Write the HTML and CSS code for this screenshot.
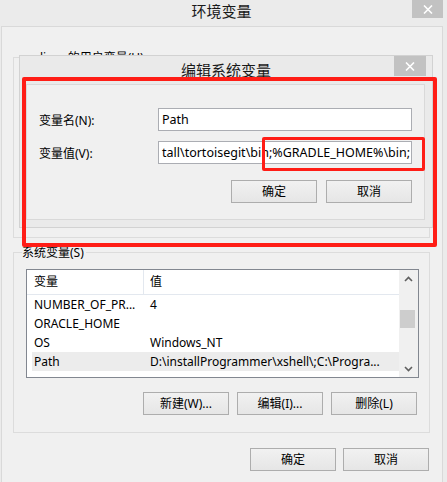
FILE: index.html
```html
<!DOCTYPE html>
<html lang="zh-CN">
<head>
<meta charset="utf-8">
<title>环境变量</title>
<link rel="stylesheet" href="styles.css">
</head>
<body>
<div class="window">
  <div class="titlebar">
    <span class="spacer"></span>
    <span class="title">环境变量</span>
    <span class="close-cell">
      <span class="close close-main">
        <svg width="10" height="9" viewBox="0 0 10 9"><path d="M1 0.5 L9 8.5 M9 0.5 L1 8.5" stroke="#fff" stroke-width="1.6" fill="none"/></svg>
      </span>
    </span>
  </div>
  <div class="client">
    <div class="group user-group">
      <div class="group-label">malimo 的用户变量(U)</div>
    </div>
    <div class="group sys-group">
      <div class="group-label">系统变量(S)</div>
      <div class="listview">
        <div class="list-body">
          <div class="list-header">
            <div class="hcell c1">变量</div>
            <div class="hcell c2">值</div>
          </div>
          <div class="row"><span class="cell">NUMBER_OF_PR...</span><span class="cell">4</span></div>
          <div class="row"><span class="cell">ORACLE_HOME</span><span class="cell"></span></div>
          <div class="row"><span class="cell">OS</span><span class="cell">Windows_NT</span></div>
          <div class="row selected"><span class="cell">Path</span><span class="cell">D:\installProgrammer\xshell\;C:\Progra...</span></div>
        </div>
        <div class="scrollbar">
          <div class="sb-arrow">
            <svg width="9" height="6" viewBox="0 0 9 6"><path d="M1 5 L4.5 1.5 L8 5" stroke="#5f5f5f" stroke-width="1.6" fill="none"/></svg>
          </div>
          <div class="sb-track"><div class="sb-thumb"></div></div>
          <div class="sb-arrow">
            <svg width="9" height="6" viewBox="0 0 9 6"><path d="M1 1 L4.5 4.5 L8 1" stroke="#5f5f5f" stroke-width="1.6" fill="none"/></svg>
          </div>
        </div>
      </div>
      <div class="btn-row group-btns">
        <button class="btn">新建(W)...</button>
        <button class="btn">编辑(I)...</button>
        <button class="btn">删除(L)</button>
      </div>
    </div>
    <div class="btn-row main-btns">
      <button class="btn">确定</button>
      <button class="btn">取消</button>
    </div>
  </div>

  <div class="edit-dialog">
    <div class="dlg-titlebar">
      <span class="spacer"></span>
      <span class="dlg-title">编辑系统变量</span>
      <span class="close-cell">
        <span class="close close-dlg">
          <svg width="10" height="9" viewBox="0 0 10 9"><path d="M1 0.5 L9 8.5 M9 0.5 L1 8.5" stroke="#fff" stroke-width="1.6" fill="none"/></svg>
        </span>
      </span>
    </div>
    <div class="dlg-client">
      <div class="form-row">
        <label class="form-label">变量名(N):</label>
        <div class="textbox">Path</div>
      </div>
      <div class="form-row">
        <label class="form-label">变量值(V):</label>
        <div class="textbox">tall\tortoisegit\bin;%GRADLE_HOME%\bin;</div>
      </div>
      <div class="btn-row dlg-btns">
        <button class="btn">确定</button>
        <button class="btn">取消</button>
      </div>
    </div>
  </div>

  <div class="mark mark-big"></div>
  <div class="mark mark-small"></div>
</div>
</body>
</html>
```

FILE: styles.css
```css
* { box-sizing: border-box; }

html, body {
  margin: 0;
  padding: 0;
  background: #ebebeb;
}

body {
  font-family: "Noto Sans", "Noto Sans CJK SC", sans-serif;
  font-size: 12px;
  color: #000;
}

.window {
  position: relative;
  width: 447px;
  height: 482px;
  overflow: hidden;
  background: #ebebeb;
}

/* ---------- title bars ---------- */
.titlebar {
  display: grid;
  grid-template-columns: 1fr auto 1fr;
  height: 26px;
  padding-right: 4px;
}

.title {
  font-family: "Noto Sans CJK SC", sans-serif;
  font-size: 15px;
  line-height: 22px;
  color: #1a1a1a;
}

.close-cell {
  display: flex;
  justify-content: flex-end;
  align-items: flex-start;
}

.close {
  display: flex;
  align-items: center;
  justify-content: center;
  background: #c2c2c2;
}

.close-main {
  width: 31px;
  height: 18px;
}

.close-dlg {
  width: 32px;
  height: 20px;
}

/* ---------- main client ---------- */
.client {
  margin-left: 1px;
  width: 442px;
  height: 456px;
  border: 1px solid #d9d9d9;
  border-bottom: none;
  background: #f0f0f0;
  padding-left: 11px;
  padding-top: 30px;
}

.group {
  width: 417px;
  height: 181px;
  border: 1px solid #dcdcdc;
}

.sys-group {
  margin-top: 14px;
}

.group-label {
  width: fit-content;
  margin-top: -8px;
  margin-left: 8px;
  padding-right: 2px;
  height: 16px;
  line-height: 16px;
  background: #f0f0f0;
}

/* ---------- list view ---------- */
.listview {
  display: flex;
  margin-top: 8px;
  margin-left: 12px;
  width: 393px;
  height: 109px;
  border: 1px solid #828790;
  background: #fff;
}

.list-body {
  flex: 1;
  overflow: hidden;
}

.list-header {
  display: flex;
  height: 25px;
  border-bottom: 1px solid #e3e8ef;
}

.hcell {
  line-height: 24px;
  white-space: nowrap;
}

.hcell.c1 {
  width: 117px;
  padding-left: 7px;
  border-right: 1px solid #e3e8ef;
}

.hcell.c2 {
  padding-left: 6px;
}

.row {
  display: grid;
  grid-template-columns: 116px 1fr;
  margin-left: 5px;
  height: 19px;
  line-height: 19px;
  white-space: nowrap;
}

.row .cell {
  padding-left: 2px;
  overflow: hidden;
}

.row.selected {
  background: #ececec;
}

/* ---------- scrollbar ---------- */
.scrollbar {
  width: 19px;
  display: flex;
  flex-direction: column;
  background: #f0f0f0;
}

.sb-arrow {
  height: 17px;
  display: flex;
  align-items: center;
  justify-content: center;
}

.sb-track {
  flex: 1;
  padding-top: 23px;
}

.sb-thumb {
  width: 15px;
  height: 18px;
  margin-left: 1px;
  background: #cdcdcd;
}

/* ---------- buttons ---------- */
.btn-row {
  display: flex;
  justify-content: flex-end;
}

.btn {
  width: 86px;
  height: 23px;
  padding: 0;
  border: 1px solid #adadad;
  background: linear-gradient(#f1f1f1, #e6e6e6);
  font-family: "Noto Sans", "Noto Sans CJK SC", sans-serif;
  font-size: 12px;
  line-height: 20px;
  color: #000;
}

.group-btns {
  margin-top: 14px;
  padding-right: 12px;
  gap: 8px;
}

.main-btns {
  margin-top: 15px;
  padding-right: 13px;
  gap: 7px;
}

/* ---------- edit dialog (overlay) ---------- */
.edit-dialog {
  position: absolute;
  left: 19px;
  top: 55px;
  width: 414px;
  height: 173px;
  border: 1px solid #d2d2d2;
  background: #eaeaea;
}

.dlg-titlebar {
  display: grid;
  grid-template-columns: 1fr auto 1fr;
  height: 28px;
  padding: 0 6px;
}

.dlg-title {
  font-family: "Noto Sans CJK SC", sans-serif;
  font-size: 15px;
  line-height: 28px;
  color: #1a1a1a;
}

.dlg-client {
  margin-left: 6px;
  width: 399px;
  height: 136px;
  border: 1px solid #d9d9d9;
  background: #f0f0f0;
  padding-top: 23px;
  padding-right: 12px;
}

.form-row {
  display: flex;
  align-items: center;
  height: 23px;
  margin-bottom: 10px;
}

.form-label {
  width: 131px;
  padding-left: 12px;
  white-space: nowrap;
}

.textbox {
  width: 254px;
  height: 23px;
  border: 1px solid #abadb3;
  background: #fff;
  padding-left: 3px;
  line-height: 21px;
  white-space: nowrap;
  overflow: hidden;
  font-size: 12.5px;
}

.dlg-btns {
  margin-top: 16px;
  gap: 9px;
}

/* ---------- annotation marks ---------- */
.mark {
  position: absolute;
  border-style: solid;
  border-color: #ff1d16;
  border-radius: 2px;
}

.mark-big {
  left: 22px;
  top: 77px;
  width: 415px;
  height: 170px;
  border-width: 4px;
}

.mark-small {
  left: 262px;
  top: 137px;
  width: 163px;
  height: 34px;
  border-width: 3px;
}
```
